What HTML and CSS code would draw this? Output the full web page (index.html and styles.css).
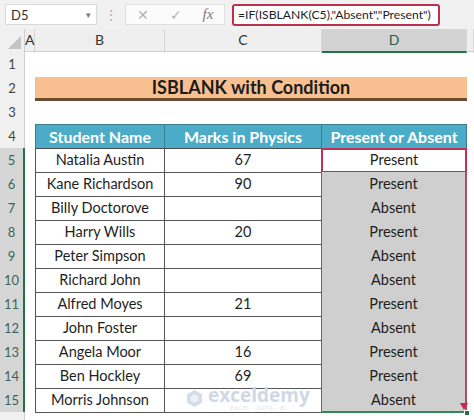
FILE: index.html
```html
<!DOCTYPE html>
<html>
<head>
    <title>ISBLANK with Condition</title>
    <link rel="stylesheet" href="styles.css">
</head>
<body>
    <div class="toolbar">
        <div class="namebox">D5<span class="drop">&#9662;</span></div>
        <div class="dots">&#8942;</div>
        <div class="fxbox">
            <span class="ico">&#10005;</span>
            <span class="ico">&#10003;</span>
            <span class="fx">fx</span>
        </div>
        <div class="formula">=IF(ISBLANK(C5),"Absent","Present")</div>
    </div>

    <div class="sheet">
        <!-- column headers -->
        <div class="row colheads">
            <div class="rh corner"><span class="tri"></span></div>
            <div class="ch">A</div>
            <div class="ch">B</div>
            <div class="ch">C</div>
            <div class="ch sel">D</div>
            <div class="ch"></div>
        </div>

        <div class="row">
            <div class="rh">1</div>
            <div></div><div></div><div></div><div></div><div></div>
        </div>
        <div class="row">
            <div class="rh">2</div>
            <div></div>
            <div class="title">ISBLANK with Condition</div>
            <div></div>
        </div>
        <div class="row">
            <div class="rh">3</div>
            <div></div><div></div><div></div><div></div><div></div>
        </div>
        <div class="row">
            <div class="rh">4</div>
            <div></div>
            <div class="th first">Student Name</div>
            <div class="th">Marks in Physics</div>
            <div class="th">Present or Absent</div>
            <div></div>
        </div>

        <div class="row">
            <div class="rh on">5</div>
            <div></div>
            <div class="td name">Natalia Austin</div>
            <div class="td mark">67</div>
            <div class="td res active">Present</div>
            <div></div>
        </div>
        <div class="row">
            <div class="rh on">6</div>
            <div></div>
            <div class="td name">Kane Richardson</div>
            <div class="td mark">90</div>
            <div class="td res">Present</div>
            <div></div>
        </div>
        <div class="row">
            <div class="rh on">7</div>
            <div></div>
            <div class="td name">Billy Doctorove</div>
            <div class="td mark"></div>
            <div class="td res">Absent</div>
            <div></div>
        </div>
        <div class="row">
            <div class="rh on">8</div>
            <div></div>
            <div class="td name">Harry Wills</div>
            <div class="td mark">20</div>
            <div class="td res">Present</div>
            <div></div>
        </div>
        <div class="row">
            <div class="rh on">9</div>
            <div></div>
            <div class="td name">Peter Simpson</div>
            <div class="td mark"></div>
            <div class="td res">Absent</div>
            <div></div>
        </div>
        <div class="row">
            <div class="rh on">10</div>
            <div></div>
            <div class="td name">Richard John</div>
            <div class="td mark"></div>
            <div class="td res">Absent</div>
            <div></div>
        </div>
        <div class="row">
            <div class="rh on">11</div>
            <div></div>
            <div class="td name">Alfred Moyes</div>
            <div class="td mark">21</div>
            <div class="td res">Present</div>
            <div></div>
        </div>
        <div class="row">
            <div class="rh on">12</div>
            <div></div>
            <div class="td name">John Foster</div>
            <div class="td mark"></div>
            <div class="td res">Absent</div>
            <div></div>
        </div>
        <div class="row">
            <div class="rh on">13</div>
            <div></div>
            <div class="td name">Angela Moor</div>
            <div class="td mark">16</div>
            <div class="td res">Present</div>
            <div></div>
        </div>
        <div class="row">
            <div class="rh on">14</div>
            <div></div>
            <div class="td name">Ben Hockley</div>
            <div class="td mark">69</div>
            <div class="td res">Present</div>
            <div></div>
        </div>
        <div class="row">
            <div class="rh on">15</div>
            <div></div>
            <div class="td name">Morris Johnson</div>
            <div class="td mark"></div>
            <div class="td res last">Absent<span class="arrow"></span><span class="handle"></span></div>
            <div></div>
        </div>
        <div class="row">
            <div class="rh"></div>
            <div></div><div></div><div></div><div></div><div></div>
        </div>

        <!-- watermark -->
        <div class="mark-logo">
            <svg width="17" height="19" viewBox="0 0 18 20">
                <path d="M9 1 L17 5.5 V14.5 L9 19 L1 14.5 V5.5 Z" fill="#d5dde8"/>
                <path d="M5 8 L9 5.5 L13 8 V12 L9 14.5 L5 12 Z" fill="#eef2f7"/>
            </svg>
            <div>
                <div class="brand">exceldemy</div>
                <div class="tag">EXCEL &middot; DATA &middot; BI</div>
            </div>
        </div>
    </div>
</body>
</html>
```

FILE: styles.css
```css
* {
    box-sizing: border-box;
}
body {
    margin: 0;
    width: 474px;
    height: 420px;
    overflow: hidden;
    background-color: #ffffff;
    font-family: Lato, "Open Sans", sans-serif;
    color: #1e1e1e;
}

/* formula bar */
.toolbar {
    height: 29px;
    background-color: #f1f1f1;
    display: flex;
    align-items: flex-start;
    padding: 4px 0 0 5px;
}
.namebox {
    width: 92px;
    height: 21px;
    background-color: #fff;
    border: 1px solid #dadada;
    display: flex;
    align-items: center;
    justify-content: space-between;
    padding: 0 5px 0 5px;
    font-size: 13px;
    color: #333;
}
.drop {
    font-size: 9px;
    color: #777;
}
.dots {
    width: 28px;
    text-align: center;
    font-size: 14px;
    line-height: 21px;
    color: #b5b5b5;
}
.fxbox {
    width: 100px;
    height: 21px;
    background-color: #fbfbfb;
    border: 1px solid #e0e0e0;
    display: flex;
    align-items: center;
    justify-content: space-around;
    color: #b3b3b3;
    font-size: 14px;
}
.fx {
    font-family: "Liberation Serif", serif;
    font-style: italic;
    font-size: 15px;
    color: #7a7a7a;
}
.formula {
    margin-left: 7px;
    width: 208px;
    height: 22px;
    border: 2px solid #b8324f;
    border-radius: 3px;
    background-color: #fff;
    font-size: 12.2px;
    line-height: 18px;
    padding-left: 4px;
    color: #1e1e1e;
    white-space: nowrap;
}

/* grid */
.sheet {
    position: relative;
}
.row {
    display: grid;
    grid-template-columns: 25px 10px 130px 157px 145px 1fr;
    height: 24px;
}
.row > div {
    font-size: 14.5px;
}
.colheads {
    height: 23px;
    background-color: #efefef;
    border-bottom: 1px solid #d0d0d0;
}
.ch {
    border-right: 1px solid #d6d6d6;
    text-align: center;
    font-size: 14px !important;
    line-height: 22px;
    color: #333;
}
.ch.sel {
    background-color: #d3d3d3;
    border-bottom: 2px solid #217346;
    color: #2a5c40;
}
.rh {
    background-color: #f0f0f0;
    border-right: 1px solid #cfcfcf;
    border-bottom: 1px solid #e2e2e2;
    text-align: center;
    font-size: 13px !important;
    line-height: 24px;
    color: #444;
}
.rh.on {
    background-color: #d6d6d6;
    border-right: 2px solid #217346;
    border-bottom-color: #c6c6c6;
    color: #3d6650;
}
.corner {
    position: relative;
    border-bottom: none;
}
.tri {
    position: absolute;
    right: 3px;
    bottom: 4px;
    width: 0;
    height: 0;
    border-left: 13px solid transparent;
    border-bottom: 13px solid #c4c4c4;
}

/* title */
.title {
    grid-column: 3 / 6;
    margin-top: 1px;
    background-color: #f8c090;
    border-bottom: 3px solid #6b4b32;
    text-align: center;
    font-weight: bold;
    font-size: 18px !important;
    line-height: 20px;
    color: #1b1b1b;
}

/* table */
.th {
    background-color: #4aacc6;
    color: #fff;
    font-weight: bold;
    font-size: 16px !important;
    text-align: center;
    line-height: 23px;
    border-top: 1px solid #3d7f91;
    border-right: 1px solid #3d7f91;
    border-bottom: 1px solid #4a4a4a;
}
.th.first {
    border-left: 1px solid #3d7f91;
}
.td {
    line-height: 23px;
    border-bottom: 1px solid #555;
    border-right: 1px solid #555;
}
.name {
    text-align: center;
    border-left: 1px solid #555;
}
.mark {
    text-align: center;
}
.res {
    text-align: center;
    background-color: #cfcfcf;
    border-left: 1px solid #2f8a5a;
    border-right: 2px solid #b54a63;
    border-bottom-color: #4a4a4a;
    margin-left: -1px;
    position: relative;
}
.res.active {
    background-color: #fff;
    border: 2px solid #c22f55;
    line-height: 20px;
}
.res.last {
    border-bottom: 2px solid #2f8a5a;
    height: 25px;
}
.arrow {
    position: absolute;
    right: -3px;
    bottom: 1px;
    width: 0;
    height: 0;
    border-left: 4px solid transparent;
    border-right: 4px solid transparent;
    border-top: 7px solid #d0254d;
}
.handle {
    position: absolute;
    right: -5px;
    bottom: -5px;
    width: 6px;
    height: 6px;
    background-color: #217346;
    border: 1px solid #fff;
}

/* watermark */
.mark-logo {
    position: absolute;
    left: 186px;
    top: 356px;
    height: 26px;
    display: flex;
    align-items: center;
    gap: 5px;
    font-size: 6px;
}
.brand {
    font-family: "Open Sans", sans-serif;
    font-weight: bold;
    font-size: 19px;
    line-height: 20px;
    color: #cfd8e6;
}
.tag {
    font-size: 5px;
    line-height: 6px;
    letter-spacing: 1px;
    color: #d8dee8;
    text-align: center;
}
```
